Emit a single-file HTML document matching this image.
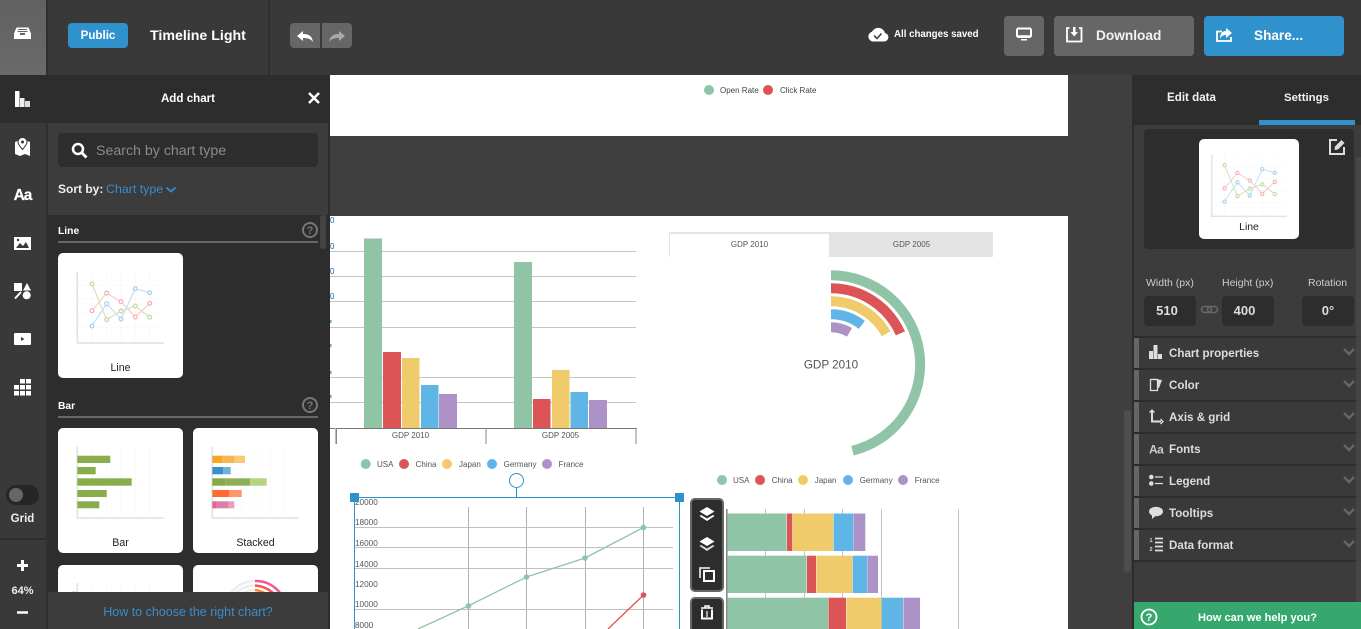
<!DOCTYPE html>
<html lang="en"><head><meta charset="utf-8"><title>Timeline Light</title>
<style>
*{box-sizing:border-box}
html,body{margin:0;padding:0;width:1361px;height:629px;overflow:hidden;background:#3f3f3f;font-family:"Liberation Sans",sans-serif}
#wrap{position:relative;width:1361px;height:629px;overflow:hidden}
.a{position:absolute}
.t{position:absolute;white-space:nowrap;line-height:16px;height:16px;color:#fff}
.b{font-weight:bold}
.c{text-align:center}
.card{position:absolute;background:#fff;border-radius:5px;width:125px;height:125px;overflow:hidden}
.card svg{position:absolute;left:0;top:0;filter:blur(.35px)}
.card .t{color:#222;font-size:10.6px;left:0;width:100%;text-align:center;top:107px}
svg{display:block}
.row{position:absolute;left:1134px;width:227px;height:30px;background:#3a3a3a;border-left:5px solid #666}
.row .t{left:30px;font-size:11.6px;font-weight:bold;color:#ddd;top:8px}
.row svg{position:absolute;left:0;top:0}
.in{position:absolute;top:296px;height:30px;background:#2d2d2d;border-radius:4px;color:#ddd;font-size:13px;font-weight:bold;text-align:center;line-height:30px}
.lb{font-size:10.5px;color:#ccc;font-weight:normal}
</style></head><body><div id="wrap">

<svg class="a" style="left:0;top:0" width="1361" height="629" viewBox="0 0 1361 629" font-family="'Liberation Sans',sans-serif">
<rect width="1361" height="629" fill="#3f3f3f"/>
<rect x="330" y="75" width="738" height="61" fill="#fff"/>
<rect x="330" y="216" width="738" height="413" fill="#fff"/>
<rect x="1124" y="410" width="7" height="162" rx="3" fill="#4e4e4e"/>
<g font-size="8" fill="#444">
<circle cx="709" cy="90" r="5" fill="#8fc4a7"/><text x="720" y="93">Open Rate</text>
<circle cx="768" cy="90" r="5" fill="#dd5457"/><text x="780" y="93">Click Rate</text>
</g>

<!-- column chart -->
<g stroke="#c4c4c4" stroke-width="1"><path d="M330 251.5H636M330 276.5H636M330 301.5H636M330 327.5H636M330 377.5H636M330 402.5H636"/></g>
<g fill="#1d5fa8" font-size="8"><text x="330" y="223">0</text><text x="330" y="249">0</text><text x="330" y="274">0</text><text x="330" y="299">0</text></g>
<g fill="#5aa5dc"><rect x="330" y="320" width="1.5" height="3"/><rect x="330" y="344" width="1.5" height="3"/><rect x="330" y="371" width="1.5" height="3"/><rect x="330" y="395" width="1.5" height="3"/></g>
<rect x="364" y="238.500" width="18" height="189.500" fill="#8fc4a7"/>
<rect x="383" y="352" width="18" height="76" fill="#dd5457"/>
<rect x="402" y="358" width="17.500" height="70" fill="#f0cb6b"/>
<rect x="421" y="385" width="17.500" height="43" fill="#5fb6e6"/>
<rect x="439" y="394" width="18" height="34" fill="#ad92c8"/>
<rect x="514" y="262" width="18" height="166" fill="#8fc4a7"/>
<rect x="533" y="399" width="17.500" height="29" fill="#dd5457"/>
<rect x="552" y="370" width="17.500" height="58" fill="#f0cb6b"/>
<rect x="570.500" y="392" width="17.500" height="36" fill="#5fb6e6"/>
<rect x="589" y="400" width="18" height="28" fill="#ad92c8"/>
<path d="M330 428.500H637" stroke="#777" stroke-width="1"/>
<rect x="335" y="428" width="1.300" height="16" fill="#bbb"/>
<path d="M336.500 428V444M486 428V444M636 428V444" stroke="#888" stroke-width="1"/>
<g font-size="8" fill="#555" text-anchor="middle"><text x="410.500" y="438">GDP 2010</text><text x="560.500" y="438">GDP 2005</text></g>
<g font-size="8" fill="#555">
<circle cx="365.700" cy="464" r="5" fill="#8fc4a7"/><text x="377" y="467">USA</text>
<circle cx="404" cy="464" r="5" fill="#dd5457"/><text x="415.600" y="467">China</text>
<circle cx="447" cy="464" r="5" fill="#f0cb6b"/><text x="459" y="467">Japan</text>
<circle cx="492" cy="464" r="5" fill="#5fb6e6"/><text x="503.600" y="467">Germany</text>
<circle cx="547" cy="464" r="5" fill="#ad92c8"/><text x="558.600" y="467">France</text>
</g>

<!-- tabs + radial -->
<rect x="669" y="232" width="324" height="25" fill="#e4e4e4" rx="1"/>
<rect x="670" y="234" width="159" height="23" fill="#fff" rx="1"/>
<g font-size="8" fill="#555" text-anchor="middle"><text x="749.500" y="247">GDP 2010</text><text x="911.500" y="247">GDP 2005</text></g>
<g fill="none" stroke-width="10">
<path d="M831 275.300A89 89 0 0 1 852.500 450.700" stroke="#8fc4a7"/>
<path d="M831 288.300A76 76 0 0 1 900.400 333.400" stroke="#dd5457"/>
<path d="M831 301.300A63 63 0 0 1 886.100 333.800" stroke="#f0cb6b"/>
<path d="M831 314.300A50 50 0 0 1 861.800 324.900" stroke="#5fb6e6"/>
<path d="M831 327.300A37 37 0 0 1 849.500 332.300" stroke="#ad92c8"/>
</g>
<text x="831" y="368.500" font-size="11.700" fill="#555" text-anchor="middle">GDP 2010</text>
<g font-size="8" fill="#555">
<circle cx="722" cy="480" r="5" fill="#8fc4a7"/><text x="733" y="483">USA</text>
<circle cx="760" cy="480" r="5" fill="#dd5457"/><text x="771.700" y="483">China</text>
<circle cx="803" cy="480" r="5" fill="#f0cb6b"/><text x="814.700" y="483">Japan</text>
<circle cx="848" cy="480" r="5" fill="#5fb6e6"/><text x="859.700" y="483">Germany</text>
<circle cx="903" cy="480" r="5" fill="#ad92c8"/><text x="914.700" y="483">France</text>
</g>

<!-- line chart -->
<path d="M468.500 507V629M526.500 507V629M585.500 507V629M643.500 507V629" stroke="#b0b0b0" stroke-width="1"/>
<path d="M355 527.500H673M355 547.500H673M355 568.500H673M355 609.500H673" stroke="#c0c0c0" stroke-width="1"/>
<g font-size="8.200" fill="#555">
<text x="355" y="505">20000</text><text x="355" y="525">18000</text><text x="355" y="546">16000</text><text x="355" y="567">14000</text><text x="355" y="587">12000</text><text x="355" y="607">10000</text><text x="355" y="628">8000</text>
</g>
<path d="M418 629L468 606L526.500 577L585 558L643.500 527.500" fill="none" stroke="#8fc4a7" stroke-width="1.300"/>
<path d="M608 629L643.500 595" fill="none" stroke="#dd5457" stroke-width="1.300"/>
<g fill="#8fc4a7"><circle cx="468.500" cy="606" r="2.800"/><circle cx="526.500" cy="577" r="2.800"/><circle cx="585" cy="558" r="2.800"/><circle cx="643.500" cy="527.500" r="2.800"/></g>
<circle cx="643.500" cy="595" r="2.800" fill="#dd5457"/>
<g stroke="#3092cd" fill="none" stroke-width="1">
<path d="M354.500 497.500H679.500V629M354.500 497.500V629M516.500 487V497"/>
<circle cx="516.500" cy="480.500" r="7" fill="#fff"/>
</g>
<rect x="350" y="493" width="9" height="9" fill="#3092cd"/>
<rect x="675" y="493" width="9" height="9" fill="#3092cd"/>

<!-- stacked bars -->
<path d="M765.500 509V629M804.500 509V629M842.500 509V629M881.500 509V629M958.500 509V629" stroke="#c4c4c4" stroke-width="1"/>
<rect x="726" y="509" width="1.600" height="120" fill="#888"/>
<g>
<rect x="727.600" y="513.500" width="59" height="37.500" fill="#8fc4a7"/><rect x="787" y="513.500" width="5.300" height="37.500" fill="#dd5457"/><rect x="792.700" y="513.500" width="40.500" height="37.500" fill="#f0cb6b"/><rect x="833.600" y="513.500" width="19.700" height="37.500" fill="#5fb6e6"/><rect x="853.600" y="513.500" width="11.700" height="37.500" fill="#ad92c8"/>
<rect x="727.600" y="555.700" width="79" height="37.300" fill="#8fc4a7"/><rect x="807" y="555.700" width="9" height="37.300" fill="#dd5457"/><rect x="816.400" y="555.700" width="36" height="37.300" fill="#f0cb6b"/><rect x="852.700" y="555.700" width="14.600" height="37.300" fill="#5fb6e6"/><rect x="867.600" y="555.700" width="10.400" height="37.300" fill="#ad92c8"/>
<rect x="727.600" y="597.700" width="100.700" height="31.300" fill="#8fc4a7"/><rect x="828.600" y="597.700" width="17.400" height="31.300" fill="#dd5457"/><rect x="846.400" y="597.700" width="35" height="31.300" fill="#f0cb6b"/><rect x="881.700" y="597.700" width="21.300" height="31.300" fill="#5fb6e6"/><rect x="903.400" y="597.700" width="16.600" height="31.300" fill="#ad92c8"/>
</g>

<!-- floating toolbars -->
<rect x="691" y="499" width="32" height="92" rx="4" fill="#2d2d2d" stroke="#666" stroke-width="2"/>
<path d="M707 507l7.500 4.500-7.500 4.500-7.500-4.500z" fill="#fff"/>
<path d="M701 515l-1.500 1 7.500 5 7.500-5-1.500-1-6 3.500z" fill="#fff"/>
<path d="M707 537l7.500 4.500-7.500 4.500-7.500-4.500z" fill="#fff"/>
<path d="M701 545l-1.500 1 7.500 5 7.500-5-1.500-1-6 3.500z" fill="#ddd"/>
<path d="M700 578v-10h10" fill="none" stroke="#ddd" stroke-width="1.800"/>
<rect x="704" y="571" width="10" height="10" fill="none" stroke="#fff" stroke-width="2"/>
<path d="M691 629V602a4 4 0 0 1 4-4h24a4 4 0 0 1 4 4v27" fill="#2d2d2d" stroke="#666" stroke-width="2"/>
<path d="M701 608h12M705 608v-2h4v2" fill="none" stroke="#fff" stroke-width="1.500"/>
<path d="M702 609.500v9h10v-9" fill="none" stroke="#fff" stroke-width="2"/>
<path d="M707 611v6" stroke="#fff" stroke-width="1.200"/>

<symbol id="mini" viewBox="0 0 125 125">
<path d="M34 18V88M48.700 18V88M63 18V88M77.300 18V88M91.700 18V88M20 32H105M20 46H105M20 60H105M20 74H105" stroke="#f9f9f9" stroke-width="1" fill="none"/>
<path d="M19.300 18.700V90H105.700" fill="none" stroke="#e4e4e4" stroke-width="1.700"/>
<g fill="#fbfbfb" stroke-width="1.200">
<path d="M34 31L48.700 66.700L63 58L77.300 53L91.700 64.300" fill="none" stroke="#d3e3b9"/>
<path d="M34 57.700L48.700 40L63 48.700L77.300 64L91.700 50.300" fill="none" stroke="#facbd0"/>
<path d="M34 73L48.700 50.700L63 66L77.300 35.700L91.700 39.700" fill="none" stroke="#c3e1f4"/>
<g stroke="#c3d9a0"><circle cx="34" cy="31" r="1.900"/><circle cx="48.700" cy="66.700" r="1.900"/><circle cx="63" cy="58" r="1.900"/><circle cx="77.300" cy="53" r="1.900"/><circle cx="91.700" cy="64.300" r="1.900"/></g>
<g stroke="#f8adb6"><circle cx="34" cy="57.700" r="1.900"/><circle cx="48.700" cy="40" r="1.900"/><circle cx="63" cy="48.700" r="1.900"/><circle cx="77.300" cy="64" r="1.900"/><circle cx="91.700" cy="50.300" r="1.900"/></g>
<g stroke="#a3d0ee"><circle cx="34" cy="73" r="1.900"/><circle cx="48.700" cy="50.700" r="1.900"/><circle cx="63" cy="66" r="1.900"/><circle cx="77.300" cy="35.700" r="1.900"/><circle cx="91.700" cy="39.700" r="1.900"/></g>
</g>
</symbol>
</svg>

<!-- top bar -->
<div class="a" style="left:0;top:0;width:1361px;height:75px;background:#393939"></div>
<div class="a" style="left:0;top:0;width:46px;height:75px;background:linear-gradient(#616161,#6a6a6a)"></div>
<div class="a" style="left:46px;top:0;width:2px;height:75px;background:#2f2f2f"></div>
<div class="a" style="left:268px;top:0;width:2px;height:75px;background:#2f2f2f"></div>
<svg class="a" style="left:0;top:0" width="46" height="75"><path d="M16.500 27.500h12l2.500 6v5.500H14v-5.500z" fill="#fff"/><path d="M18 29.500h9M17.500 31.500h10" stroke="#666" stroke-width="1"/><path d="M20 33h5v2h-5z" fill="#666"/></svg>
<div class="a" style="left:68px;top:23px;width:60px;height:25px;background:#3092cd;border-radius:4px"></div>
<div class="t b c" style="left:68px;top:28px;width:60px;font-size:11.600px">Public</div>
<div class="t b" style="left:150px;top:28px;font-size:14.200px">Timeline Light</div>
<div class="a" style="left:290px;top:23px;width:30px;height:25px;background:#666;border-radius:4px 0 0 4px"></div>
<div class="a" style="left:322px;top:23px;width:30px;height:25px;background:#666;border-radius:0 4px 4px 0"></div>
<svg class="a" style="left:290px;top:23px" width="62" height="25">
<path d="M7 13l6-5v3c6 0 9 2 10 8-2-3-5-4-10-4v3z" fill="#fff"/>
<path d="M55 13l-6-5v3c-6 0-9 2-10 8 2-3 5-4 10-4v3z" fill="#a8a8a8"/></svg>

<svg class="a" style="left:866px;top:26px" width="24" height="18"><path d="M7 15.500a5 5 0 0 1-1-9.800 7 7 0 0 1 13 1.300 4.300 4.300 0 0 1-.7 8.500z" fill="#fff"/><path d="M8 9.500l3 3 4.500-5" fill="none" stroke="#393939" stroke-width="1.500"/></svg>
<div class="t b" style="left:894px;top:27px;font-size:9.700px">All changes saved</div>
<div class="a" style="left:1004px;top:16px;width:40px;height:40px;background:#666;border-radius:4px"></div>
<svg class="a" style="left:1004px;top:16px" width="40" height="40"><rect x="13" y="12.500" width="14" height="8.500" rx="1.500" fill="#666" stroke="#fff" stroke-width="2"/><path d="M17 23h6v1.500h-6z" fill="#fff"/><path d="M14 20h12" stroke="#fff" stroke-width="1.500"/></svg>
<div class="a" style="left:1054px;top:16px;width:140px;height:40px;background:#666;border-radius:4px"></div>
<svg class="a" style="left:1054px;top:16px" width="40" height="40"><path d="M15.500 12h-2.500v13.500h14.500V12h-2.500" fill="none" stroke="#fff" stroke-width="1.800"/><path d="M19 11h2.500v5h2.500l-3.750 4.500-3.750-4.500H19z" fill="#fff"/></svg>
<div class="t b" style="left:1096px;top:28px;font-size:13.700px;color:#f2f2f2">Download</div>
<div class="a" style="left:1204px;top:16px;width:140px;height:40px;background:#3092cd;border-radius:4px"></div>
<svg class="a" style="left:1204px;top:16px" width="40" height="40"><path d="M18 15.500h-5v9.500h14v-4" fill="none" stroke="#fff" stroke-width="1.800"/><path d="M22 12l6 5-6 5v-3c-3 0-5 1-6 4 0-5 2-8 6-8z" fill="#fff"/></svg>
<div class="t b" style="left:1254px;top:28px;font-size:13.600px">Share...</div>

<!-- left rail -->
<div class="a" style="left:0;top:75px;width:46px;height:554px;background:#393939"></div>
<div class="a" style="left:46px;top:75px;width:2px;height:554px;background:#2f2f2f"></div>
<div class="a" style="left:0;top:75px;width:330px;height:48px;background:#2d2d2d"></div>
<div class="a" style="left:0;top:538px;width:46px;height:2px;background:#2d2d2d"></div>
<svg class="a" style="left:0;top:75px" width="46" height="554">
<g transform="translate(0,-75)" fill="#fff">
<path d="M15 91h4.500v16H15z"/><path d="M20 98h4.500v9H20z" fill="#eee"/><path d="M25 101h5v6h-5z" fill="#ddd"/>
<path d="M15 142l4-1.500c1 3 2 5 3.500 7 1.500-2 2.500-4 3.500-7l4 1.500v14l-5-2-5 2-5-2z"/>
<path d="M22.500 137.500a4.500 4.500 0 0 1 4.500 4.500c0 2.500-2.500 5-4.500 7.500-2-2.500-4.500-5-4.500-7.500a4.500 4.500 0 0 1 4.500-4.500z" fill="#fff" stroke="#393939" stroke-width="1"/><circle cx="22.500" cy="142" r="1.500" fill="#393939"/>
<rect x="14" y="237" width="17" height="13"/><path d="M16 248l4-5 3 3 3-4 3 6z" fill="#393939"/><circle cx="18" cy="240" r="1.200" fill="#393939"/>
<rect x="14" y="283" width="8" height="8"/><path d="M27 283l4 7.500h-8z"/><path d="M15 298.500l6-6.500" stroke="#fff" stroke-width="2"/><circle cx="26.700" cy="295.300" r="4"/>
<rect x="14" y="333" width="17" height="12" rx="1"/><path d="M21 337v4l3.500-2z" fill="#393939"/>
<g><rect x="20" y="379" width="5" height="4.500"/><rect x="26" y="379" width="5" height="4.500"/><rect x="14" y="385" width="5" height="4.500"/><rect x="20" y="385" width="5" height="4.500"/><rect x="26" y="385" width="5" height="4.500"/><rect x="14" y="391" width="5" height="4.500"/><rect x="20" y="391" width="5" height="4.500"/><rect x="26" y="391" width="5" height="4.500"/></g>
<rect x="6" y="485" width="33" height="20" rx="10" fill="#262626"/><circle cx="16" cy="495" r="7" fill="#666"/>
<path d="M17 565.500h11M22.500 560v11" stroke="#fff" stroke-width="3"/>
<path d="M17 612.500h11" stroke="#fff" stroke-width="2.500"/>
</g></svg>
<div class="t b c" style="left:0;top:188px;width:45px;font-size:15.500px;letter-spacing:-1px;-webkit-text-stroke:.2px #fff">Aa</div>
<div class="t b c" style="left:0;top:511px;width:45px;font-size:11.500px;color:#eee">Grid</div>
<div class="t b c" style="left:0;top:583px;width:45px;font-size:11px;color:#eee">64%</div>

<!-- add chart panel -->
<div class="t b c" style="left:48px;top:91px;width:280px;font-size:11.600px">Add chart</div>
<svg class="a" style="left:300px;top:84px" width="28" height="28"><path d="M9 9l10 10M19 9L9 19" stroke="#fff" stroke-width="2.500"/></svg>
<div class="a" style="left:48px;top:123px;width:280px;height:92px;background:#3c3c3c"></div>
<div class="a" style="left:58px;top:133px;width:260px;height:34px;background:#2d2d2d;border-radius:4px"></div>
<svg class="a" style="left:68px;top:139px" width="22" height="22"><circle cx="10" cy="10" r="5" fill="none" stroke="#fff" stroke-width="2.500"/><path d="M13.500 13.500l5 5" stroke="#fff" stroke-width="2.800"/></svg>
<div class="t" style="left:96px;top:143px;font-size:14.200px;color:#8a8a8a">Search by chart type</div>
<div class="t b" style="left:58px;top:181px;font-size:12px;color:#eee">Sort by:</div>
<div class="t" style="left:106px;top:181px;font-size:12.400px;color:#3a8ccb">Chart type</div>
<svg class="a" style="left:164px;top:185px" width="14" height="10"><path d="M2.500 2.500l4.500 4 4.500-4" fill="none" stroke="#3a8ccb" stroke-width="1.800"/></svg>
<div class="a" style="left:48px;top:215px;width:280px;height:414px;background:#2d2d2d;overflow:hidden"></div>
<div class="a" style="left:328px;top:123px;width:2px;height:506px;background:#2d2d2d"></div>
<div class="a" style="left:320px;top:215px;width:6px;height:34px;background:#444;border-radius:3px"></div>

<div class="t b" style="left:58px;top:224px;font-size:10.300px">Line</div>
<div class="a" style="left:58px;top:241px;width:260px;height:2px;background:#666"></div>
<svg class="a" style="left:302px;top:222px" width="16" height="16"><circle cx="8" cy="8" r="7" fill="none" stroke="#777" stroke-width="2"/><text x="8" y="12" text-anchor="middle" font-family="'Liberation Sans',sans-serif" font-weight="bold" font-size="11" fill="#777">?</text></svg>
<div class="card" style="left:58px;top:253px"><svg width="125" height="125"><use href="#mini" width="125" height="125"/></svg><div class="t">Line</div></div>

<div class="t b" style="left:58px;top:399px;font-size:10.300px">Bar</div>
<div class="a" style="left:58px;top:416px;width:260px;height:2px;background:#666"></div>
<svg class="a" style="left:302px;top:397px" width="16" height="16"><circle cx="8" cy="8" r="7" fill="none" stroke="#777" stroke-width="2"/><text x="8" y="12" text-anchor="middle" font-family="'Liberation Sans',sans-serif" font-weight="bold" font-size="11" fill="#777">?</text></svg>
<div class="card" style="left:58px;top:428px"><svg width="125" height="125">
<path d="M34 18V88M48.700 18V88M63 18V88M77.300 18V88M91.700 18V88" stroke="#f9f9f9"/>
<path d="M19.300 18.700V90H105.700" fill="none" stroke="#e4e4e4" stroke-width="1.700"/>
<g fill="#8aad4c"><rect x="19.300" y="27.700" width="33" height="7.300"/><rect x="19.300" y="39" width="18.400" height="7.300"/><rect x="19.300" y="50.300" width="54.400" height="7.400"/><rect x="19.300" y="62" width="29.400" height="7"/><rect x="19.300" y="73.300" width="22" height="7"/></g>
</svg><div class="t">Bar</div></div>
<div class="card" style="left:193px;top:428px"><svg width="125" height="125">
<path d="M34 18V88M48.700 18V88M63 18V88M77.300 18V88M91.700 18V88" stroke="#f9f9f9"/>
<path d="M19.300 18.700V90H105.700" fill="none" stroke="#e4e4e4" stroke-width="1.700"/>
<rect x="19.300" y="27.700" width="10" height="7.300" fill="#f5a623"/><rect x="29.300" y="27.700" width="12.400" height="7.300" fill="#f8b54e"/><rect x="41.700" y="27.700" width="10.300" height="7.300" fill="#fac876"/>
<rect x="19.300" y="39" width="11" height="7.300" fill="#3a90c9"/><rect x="30.300" y="39" width="7.400" height="7.300" fill="#6db3de"/>
<rect x="19.300" y="50.300" width="13.400" height="7.400" fill="#85a946"/><rect x="32.700" y="50.300" width="24.300" height="7.400" fill="#8fb155"/><rect x="57" y="50.300" width="16.700" height="7.400" fill="#b4d482"/>
<rect x="19.300" y="62" width="16.700" height="7" fill="#ff6a33"/><rect x="36" y="62" width="12.700" height="7" fill="#ff9672"/>
<rect x="19.300" y="73.300" width="3.700" height="7" fill="#e0649a"/><rect x="23" y="73.300" width="12.700" height="7" fill="#dc7ea6"/><rect x="35.700" y="73.300" width="5.600" height="7" fill="#eb9dc0"/>
</svg><div class="t">Stacked</div></div>
<div class="card" style="left:58px;top:565px;height:64px"><svg width="125" height="64">
<path d="M34 18V64M48.700 18V64M63 18V64M77.300 18V64M91.700 18V64" stroke="#f9f9f9"/>
<path d="M19.300 18V64" stroke="#e4e4e4" stroke-width="1.700"/><path d="M14 27h5" stroke="#e4e4e4" stroke-width="2"/>
</svg></div>
<div class="card" style="left:193px;top:565px;height:64px"><svg width="125" height="64">
<g fill="none" stroke-width="2.500"><path d="M30 50A32 35 0 0 1 62 16" stroke="#eee"/><path d="M33 50A29 30 0 0 1 62 20.500" stroke="#eee"/><path d="M37 50A25 26 0 0 1 62 25" stroke="#eee"/>
<path d="M62 16A32 35 0 0 1 95 50" stroke="#f0589a"/><path d="M62 20.500A30 30 0 0 1 90 50" stroke="#ef5a5a"/><path d="M62 25A26 26 0 0 1 85 50" stroke="#ff8a3c"/></g>
</svg></div>
<div class="a" style="left:48px;top:592px;width:280px;height:37px;background:#3c3c3c"></div>
<div class="t c" style="left:48px;top:604px;width:280px;font-size:12.500px;color:#3a8ccb">How to choose the right chart?</div>

<!-- right panel -->
<div class="a" style="left:1132px;top:75px;width:229px;height:554px;background:#3c3c3c;border-left:2px solid #2d2d2d"></div>
<div class="a" style="left:1132px;top:75px;width:229px;height:50px;background:#2d2d2d"></div>
<div class="a" style="left:1259px;top:120px;width:96px;height:5px;background:#3092cd"></div>
<div class="t b" style="left:1167px;top:90px;font-size:11.600px;color:#f2f2f2">Edit data</div>
<div class="t b" style="left:1284px;top:90px;font-size:11.400px;color:#f2f2f2">Settings</div>
<div class="a" style="left:1144px;top:129px;width:210px;height:120px;background:#2d2d2d;border-radius:4px"></div>
<div class="card" style="left:1199px;top:139px;width:100px;height:100px"><svg width="100" height="100"><use href="#mini" x="-4" y="-1.500" width="108.750" height="110"/></svg><div class="t" style="top:81px;font-size:10.400px;color:#222">Line</div></div>
<svg class="a" style="left:1327px;top:137px" width="20" height="20"><path d="M10 3H3v14h14v-7" fill="none" stroke="#ddd" stroke-width="2"/><path d="M8 9.500L14.500 3l3 3L11 12.500l-3.500.500z" fill="#ddd"/></svg>
<div class="t lb" style="left:1146px;top:275px">Width (px)</div>
<div class="t lb" style="left:1222px;top:275px">Height (px)</div>
<div class="t lb" style="left:1308px;top:275px">Rotation</div>
<div class="in" style="left:1144px;width:52px;padding-right:6px">510</div>
<div class="in" style="left:1222px;width:52px;padding-right:7px">400</div>
<div class="in" style="left:1302px;width:52px">0°</div>
<svg class="a" style="left:1199px;top:303px" width="22" height="14"><rect x="2.500" y="3.500" width="10" height="6" rx="3" fill="none" stroke="#666" stroke-width="1.600"/><rect x="8.500" y="3.500" width="10" height="6" rx="3" fill="none" stroke="#666" stroke-width="1.600"/></svg>
<div class="a" style="left:1134px;top:336px;width:227px;height:226px;background:#2d2d2d"></div>

<div class="row" style="top:338px"><svg width="222" height="30"><path d="M10 13h4v8h-4zM14.500 7h4v14h-4zM19 16h4v5h-4z" fill="#ddd"/><path d="M205 11l5 5 5-5" fill="none" stroke="#666" stroke-width="2.400"/></svg><div class="t">Chart properties</div></div>
<div class="row" style="top:370px"><svg width="222" height="30"><rect x="11.500" y="9.500" width="7" height="11" fill="none" stroke="#ddd" stroke-width="1.300"/><path d="M14 8.500l9 1.500-3 8-2-.500v-7z" fill="#ddd"/><path d="M205 11l5 5 5-5" fill="none" stroke="#666" stroke-width="2.400"/></svg><div class="t">Color</div></div>
<div class="row" style="top:402px"><svg width="222" height="30"><path d="M13 9v10.500h9" fill="none" stroke="#ddd" stroke-width="2"/><path d="M10.500 10.500l2.500-2.500 2.500 2.500M21.500 17l2.500 2.500-2.500 2.500" fill="none" stroke="#ddd" stroke-width="1.300"/><path d="M205 11l5 5 5-5" fill="none" stroke="#666" stroke-width="2.400"/></svg><div class="t">Axis &amp; grid</div></div>
<div class="row" style="top:434px"><svg width="222" height="30"><text x="10" y="19.500" font-family="'Liberation Sans',sans-serif" font-weight="bold" font-size="12" letter-spacing="-.6" fill="#ccc">Aa</text><path d="M205 11l5 5 5-5" fill="none" stroke="#666" stroke-width="2.400"/></svg><div class="t">Fonts</div></div>
<div class="row" style="top:466px"><svg width="222" height="30"><circle cx="12.300" cy="11" r="2.300" fill="#ddd"/><circle cx="12.300" cy="17.500" r="2.300" fill="#ddd"/><path d="M16 11h8M16 17.500h8" stroke="#ddd" stroke-width="1.200"/><path d="M205 11l5 5 5-5" fill="none" stroke="#666" stroke-width="2.400"/></svg><div class="t">Legend</div></div>
<div class="row" style="top:498px"><svg width="222" height="30"><ellipse cx="17" cy="13.500" rx="7" ry="4.700" fill="#ddd"/><path d="M13 16.500v4.500l3.500-3z" fill="#ddd"/><path d="M205 11l5 5 5-5" fill="none" stroke="#666" stroke-width="2.400"/></svg><div class="t">Tooltips</div></div>
<div class="row" style="top:530px"><svg width="222" height="30"><path d="M16 8.500h8M16 12.500h8M16 16.500h8M16 20.500h8" stroke="#ddd" stroke-width="1.800"/><text x="10.500" y="12" font-family="'Liberation Sans',sans-serif" font-weight="bold" font-size="5.500" fill="#ddd">1</text><text x="10.500" y="21" font-family="'Liberation Sans',sans-serif" font-weight="bold" font-size="5.500" fill="#ddd">2</text><path d="M205 11l5 5 5-5" fill="none" stroke="#666" stroke-width="2.400"/></svg><div class="t">Data format</div></div>
<div class="a" style="left:1356px;top:157px;width:5px;height:445px;background:#4a4a4a;opacity:.75"></div>

<div class="a" style="left:1134px;top:602px;width:227px;height:27px;background:#36a86d"></div>
<svg class="a" style="left:1140px;top:608px" width="18" height="18"><circle cx="9" cy="9" r="7.500" fill="none" stroke="#fff" stroke-width="1.800"/><text x="9" y="13" text-anchor="middle" font-family="'Liberation Sans',sans-serif" font-weight="bold" font-size="11" fill="#fff">?</text></svg>
<div class="t b" style="left:1198px;top:610px;font-size:11.100px">How can we help you?</div>
</div></body></html>
